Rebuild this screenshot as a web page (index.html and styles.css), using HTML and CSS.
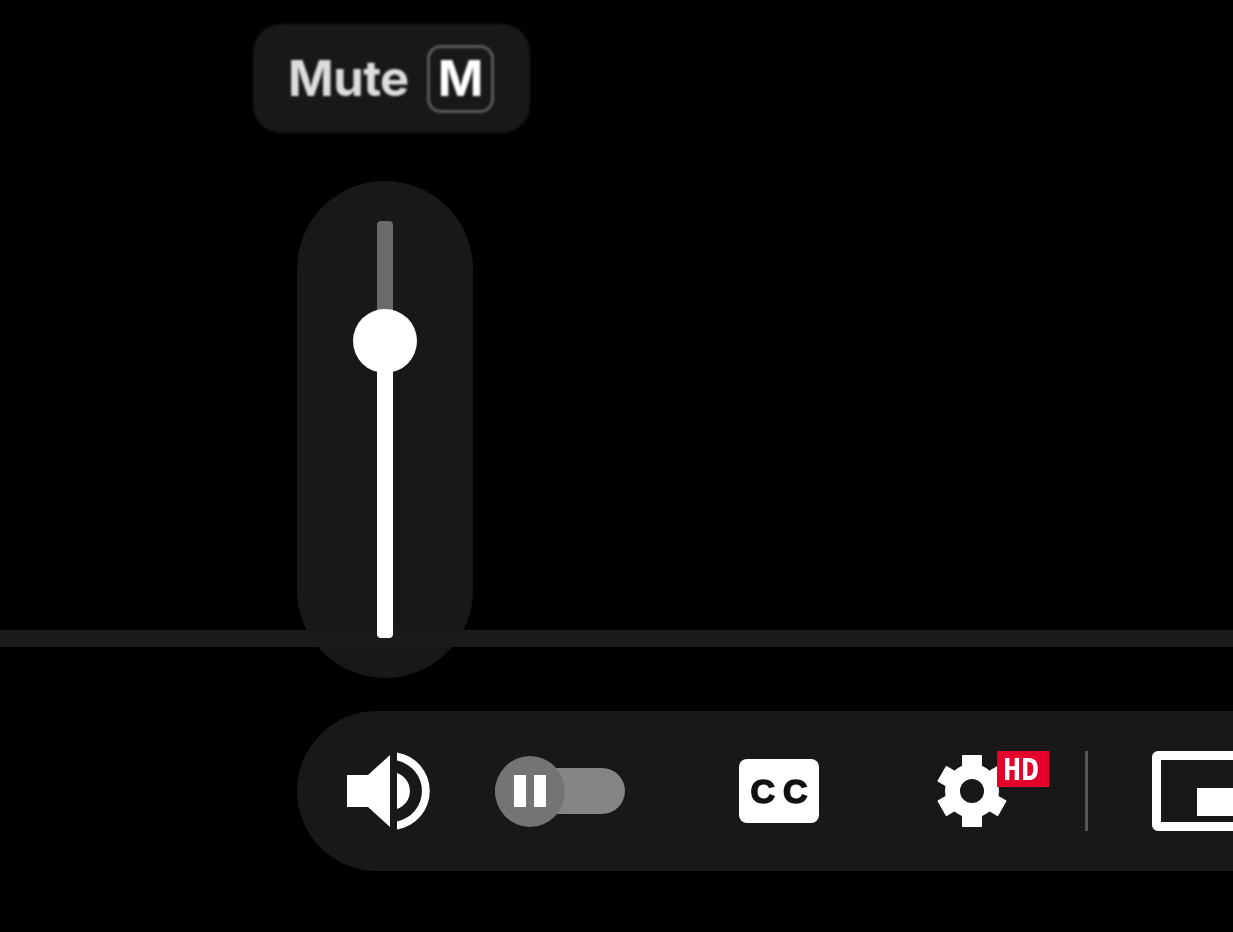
FILE: index.html
```html
<!doctype html>
<html>
  <head>
    <meta charset="utf-8" />
    <title>Player controls</title>
    <link rel="stylesheet" href="styles.css">
  </head>

  <body>
    <div class="seekbar"></div>

    <div class="tooltip">
      <span class="tooltip-label">Mute</span>
      <span class="key">M</span>
    </div>

    <div class="volume">
      <div class="track">
        <div class="track-rest"></div>
        <div class="track-fill"></div>
        <div class="thumb"></div>
      </div>
    </div>

    <div class="controls">
      <svg class="speaker" viewBox="0 0 84 80">
        <path d="M0 24h21L43 4v72L21 56H0z" fill="#fff" />
        <path d="M50 22A19 19 0 0 1 50 58z" fill="#fff" />
        <path d="M50 1.5A39 39 0 0 1 50 78.5V70.4A31 31 0 0 0 50 9.6z" fill="#fff" />
      </svg>

      <div class="autoplay">
        <div class="autoplay-handle">
          <span class="pause-bar"></span>
          <span class="pause-bar"></span>
        </div>
      </div>

      <div class="cc">CC</div>

      <div class="settings">
        <svg class="gear" viewBox="0 0 72 72">
          <circle cx="36" cy="36" r="19.5" fill="none" stroke="#fff" stroke-width="15" />
          <g fill="#fff">
            <rect x="26" y="0" width="20" height="14" rx="1" />
            <rect x="27" y="1" width="18" height="14" rx="1" transform="rotate(60 36 36)" />
            <rect x="27" y="1" width="18" height="14" rx="1" transform="rotate(120 36 36)" />
            <rect x="26" y="0" width="20" height="14" rx="1" transform="rotate(180 36 36)" />
            <rect x="27" y="1" width="18" height="14" rx="1" transform="rotate(240 36 36)" />
            <rect x="27" y="1" width="18" height="14" rx="1" transform="rotate(300 36 36)" />
          </g>
        </svg>
        <span class="badge">HD</span>
      </div>

      <div class="divider"></div>

      <div class="pip">
        <div class="pip-inner"></div>
      </div>
    </div>
  </body>
</html>
```

FILE: styles.css
```css
html,
body {
  height: 100%;
}
body {
  margin: 0;
  background: #000;
  font-family: Inter, "Liberation Sans", Arial, sans-serif;
  overflow: hidden;
  position: relative;
  display: flex;
  flex-direction: column;
  align-items: flex-start;
}

/* sits behind the volume panel */
.seekbar {
  position: absolute;
  top: 630px;
  left: 0;
  right: 0;
  height: 17px;
  background: #1b1b1b;
}

.tooltip {
  margin: 24px 0 0 253px;
  width: 277px;
  height: 109px;
  box-sizing: border-box;
  padding-left: 35px;
  border-radius: 28px;
  background: #181818;
  display: flex;
  align-items: center;
  gap: 18px;
  font-size: 49px;
  font-weight: 700;
  letter-spacing: -0.5px;
  filter: blur(0.9px);
}
.tooltip-label {
  color: #ddd;
}
.key {
  flex: none;
  width: 67px;
  height: 68px;
  box-sizing: border-box;
  border: 3px solid #5a5a5a;
  border-radius: 14px;
  color: #fff;
  display: flex;
  align-items: center;
  justify-content: center;
}

.volume {
  position: relative;
  margin: 48px 0 0 297px;
  width: 176px;
  height: 497px;
  box-sizing: border-box;
  padding-top: 40px;
  border-radius: 88px;
  background: rgba(28, 28, 28, 0.86);
  display: flex;
  justify-content: center;
  filter: blur(0.6px);
}
.track {
  position: relative;
  width: 16px;
  height: 417px;
  display: flex;
  flex-direction: column;
}
.track-rest {
  height: 100px;
  background: #6a6a6a;
  border-radius: 4px 4px 0 0;
}
.track-fill {
  flex: 1;
  background: #fff;
  border-radius: 0 0 4px 4px;
}
.thumb {
  position: absolute;
  top: 88px;
  left: -24px;
  width: 64px;
  height: 64px;
  border-radius: 50%;
  background: #fff;
}

.controls {
  margin: 33px 0 0 297px;
  align-self: stretch;
  height: 160px;
  box-sizing: border-box;
  padding-left: 50px;
  border-radius: 80px 0 0 80px;
  background: #181818;
  display: flex;
  align-items: center;
  overflow: hidden;
  filter: blur(0.6px);
}
.speaker {
  flex: none;
  width: 84px;
  height: 80px;
}

.autoplay {
  flex: none;
  margin-left: 64px;
  width: 130px;
  height: 46px;
  border-radius: 23px;
  background: #858585;
  display: flex;
  align-items: center;
}
.autoplay-handle {
  flex: none;
  width: 70px;
  height: 71px;
  border-radius: 50%;
  background: #747474;
  display: flex;
  align-items: center;
  justify-content: center;
  gap: 8px;
}
.pause-bar {
  width: 12px;
  height: 32px;
  background: #fff;
}

.cc {
  flex: none;
  margin-left: 114px;
  width: 80px;
  height: 64px;
  border-radius: 8px;
  background: #fff;
  color: #111;
  font-family: "Liberation Sans", Arial, sans-serif;
  font-size: 34px;
  font-weight: bold;
  -webkit-text-stroke: 1.5px #111;
  letter-spacing: 8px;
  padding-left: 8px;
  box-sizing: border-box;
  display: flex;
  align-items: center;
  justify-content: center;
}

.settings {
  position: relative;
  flex: none;
  margin-left: 117px;
  width: 72px;
  height: 72px;
}
.gear {
  display: block;
  width: 72px;
  height: 72px;
}
.badge {
  position: absolute;
  top: -4px;
  left: 61px;
  width: 52px;
  height: 36px;
  box-sizing: border-box;
  padding-right: 4px;
  background: #e4002b;
  color: #fff;
  font-family: "DejaVu Sans Mono", monospace;
  font-size: 30px;
  font-weight: bold;
  display: flex;
  align-items: center;
  justify-content: center;
}

.divider {
  flex: none;
  margin-left: 77px;
  width: 3px;
  height: 80px;
  background: #555;
}

.pip {
  flex: none;
  margin-left: 64px;
  width: 130px;
  height: 80px;
  box-sizing: border-box;
  border: 9px solid #fff;
  border-radius: 6px;
  padding: 0 8px 6px 36px;
  display: flex;
  align-items: flex-end;
}
.pip-inner {
  flex: 1;
  height: 28px;
  background: #fff;
}
```
